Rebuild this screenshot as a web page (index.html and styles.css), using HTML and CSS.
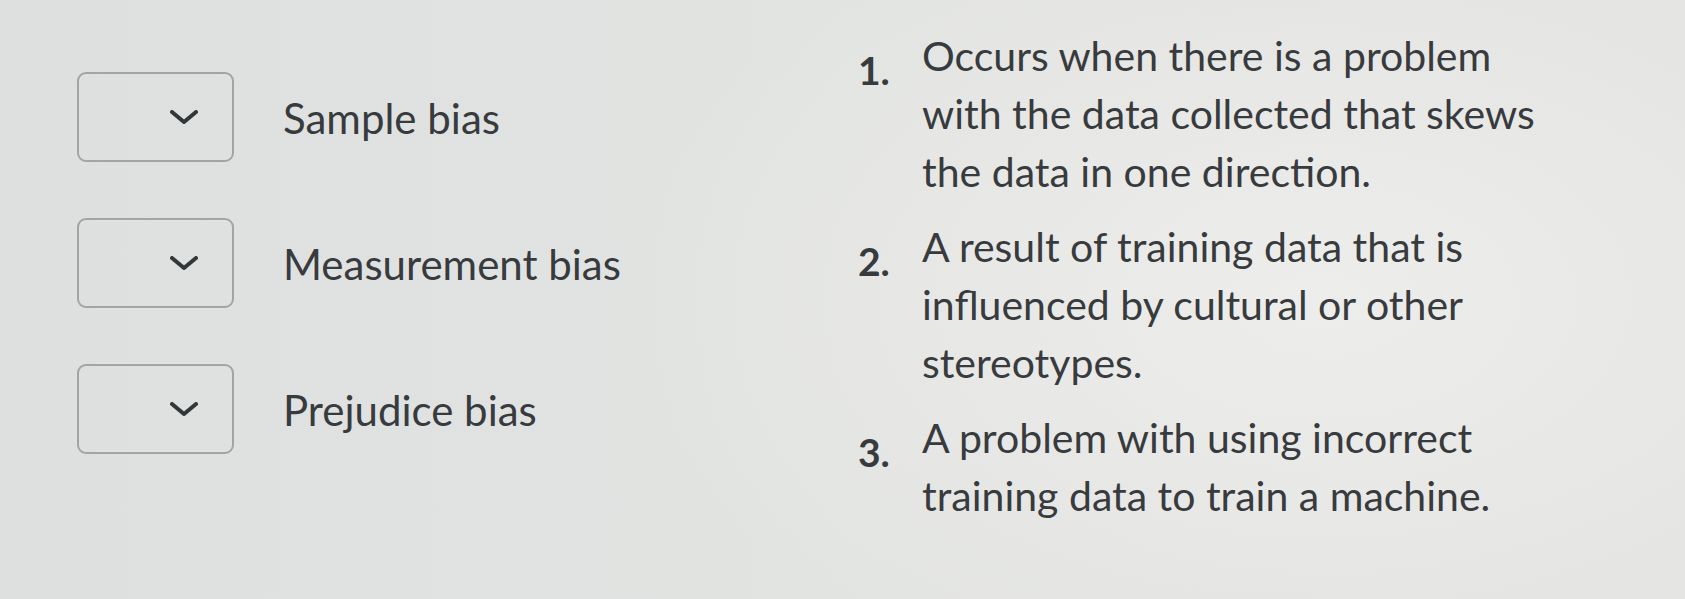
FILE: index.html
```html
<!DOCTYPE html>
<html lang="en">
<head>
    <meta charset="UTF-8">
    <meta name="viewport" content="width=device-width, initial-scale=1.0">
    <title>Match the bias</title>
    <link rel="stylesheet" href="styles.css">
</head>
<body>
    <div class="question">
        <div class="answers">
            <div class="answer-row">
                <div class="select-box">
                    <svg class="chevron" width="28" height="14" viewBox="0 0 28 14"><polyline points="2,2 14,12 26,2" /></svg>
                </div>
                <span class="answer-label">Sample bias</span>
            </div>
            <div class="answer-row">
                <div class="select-box">
                    <svg class="chevron" width="28" height="14" viewBox="0 0 28 14"><polyline points="2,2 14,12 26,2" /></svg>
                </div>
                <span class="answer-label">Measurement bias</span>
            </div>
            <div class="answer-row">
                <div class="select-box">
                    <svg class="chevron" width="28" height="14" viewBox="0 0 28 14"><polyline points="2,2 14,12 26,2" /></svg>
                </div>
                <span class="answer-label">Prejudice bias</span>
            </div>
        </div>
        <ol class="definitions">
            <li class="definition">
                <span class="num">1.</span>
                <span class="def-text">Occurs when there is a problem with the data collected that skews the data in one direction.</span>
            </li>
            <li class="definition">
                <span class="num">2.</span>
                <span class="def-text">A result of training data that is influenced by cultural or other stereotypes.</span>
            </li>
            <li class="definition">
                <span class="num">3.</span>
                <span class="def-text">A problem with using incorrect training data to train a machine.</span>
            </li>
        </ol>
    </div>
</body>
</html>
```

FILE: styles.css
```css
html, body { margin: 0; height: 100%; }
body {
    font-family: Lato, "Open Sans", sans-serif;
    color: #383b3d;
    background: radial-gradient(ellipse 700px 420px at 1320px 300px, #ededeb 0%, rgba(236,236,234,0) 100%),
                linear-gradient(90deg, #dde0df 0%, #e2e4e2 50%, #e3e3e1 100%);
    overflow: hidden;
}
.question { display: flex; padding: 20px 0 0 77px; }

.answers { width: 781px; padding-top: 52px; display: flex; flex-direction: column; gap: 56px; }
.answer-row { display: flex; align-items: center; gap: 49px; }
.select-box {
    width: 157px; height: 90px; box-sizing: border-box;
    border: 2px solid #a3a5a5; border-radius: 9px;
    display: flex; align-items: center; justify-content: flex-end;
    padding-right: 34px;
}
.chevron polyline { fill: none; stroke: #33373a; stroke-width: 4; stroke-linecap: round; stroke-linejoin: round; }
.answer-label { font-size: 42px; padding-top: 2px; }

.definitions { list-style: none; margin: 0; padding: 7px 0 0; }
.definition { display: flex; margin-bottom: 17px; }
.num { width: 64px; flex: none; font-size: 39px; font-weight: 700; line-height: 58px; margin-top: 14px; }
.def-text { width: 625px; font-size: 41px; line-height: 58px; }
```
